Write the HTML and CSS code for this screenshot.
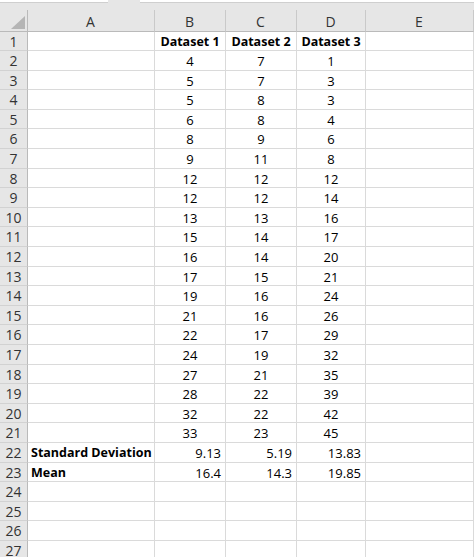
FILE: index.html
```html
<!DOCTYPE html>
<html>
<head>
  <title>Dataset statistics</title>
  <link rel="stylesheet" href="styles.css">
</head>
<body>
  <div class="workbook">
    <div class="formula-strip">
      <div class="name-box"></div>
      <div class="strip-gap"></div>
      <div class="formula-box"></div>
    </div>
    <div class="sheet" id="sheet"></div>
  </div>
  <script>
    const colB = [4, 5, 5, 6, 8, 9, 12, 12, 13, 15, 16, 17, 19, 21, 22, 24, 27, 28, 32, 33];
    const colC = [7, 7, 8, 8, 9, 11, 12, 12, 13, 14, 14, 15, 16, 16, 17, 19, 21, 22, 22, 23];
    const colD = [1, 3, 3, 4, 6, 8, 12, 14, 16, 17, 20, 21, 24, 26, 29, 32, 35, 39, 42, 45];

    const sheet = document.getElementById("sheet");

    function addCell(text, classes) {
      const cell = document.createElement("div");
      cell.className = "cell " + classes;
      cell.innerText = text;
      sheet.appendChild(cell);
      return cell;
    }

    // Column headers
    addCell("", "corner");
    ["A", "B", "C", "D", "E"].forEach(letter => addCell(letter, "col-head"));

    // Rows 1 to 27
    for (let row = 1; row <= 27; row++) {
      let cells = ["", "", "", "", ""];
      let kind = "";

      if (row === 1) {
        cells = ["", "Dataset 1", "Dataset 2", "Dataset 3", ""];
        kind = "bold center";
      } else if (row <= 21) {
        const i = row - 2;
        cells = ["", colB[i], colC[i], colD[i], ""];
        kind = "center";
      } else if (row === 22) {
        cells = ["Standard Deviation", "9.13", "5.19", "13.83", ""];
        kind = "right";
      } else if (row === 23) {
        cells = ["Mean", "16.4", "14.3", "19.85", ""];
        kind = "right";
      }

      addCell(row, "row-head");
      cells.forEach((value, col) => {
        let classes = kind;
        if (col === 0) classes = "bold";
        if (col === 4) classes = "";
        addCell(value, classes);
      });
    }
  </script>
</body>
</html>
```

FILE: styles.css
```css
/* Page reset */
body {
  margin: 0;
  background-color: #ffffff;
  font-family: "Open Sans", "Liberation Sans", sans-serif;
}

.workbook {
  width: 474px;
  height: 557px;
  overflow: hidden;
}

/* Bottom edge of the name box and formula bar */
.formula-strip {
  display: flex;
  height: 10px;
  background-color: #e6e6e6;
}

.name-box {
  width: 108px;
  height: 2px;
  background-color: #ffffff;
  border-bottom: 1px solid #cfcfcf;
}

.strip-gap {
  width: 32px;
}

.formula-box {
  flex: 1;
  height: 2px;
  background-color: #ffffff;
  border-bottom: 1px solid #cfcfcf;
}

/* Grid of cells */
.sheet {
  display: grid;
  grid-template-columns: 28px 127px 71px 71px 69px 1fr;
  grid-template-rows: 21.5px repeat(27, 19.6px);
}

.cell {
  box-sizing: border-box;
  border-right: 1px solid #dadada;
  border-bottom: 1px solid #dadada;
  font-size: 13px;
  color: #000000;
  line-height: 20px;
  padding: 0 4px 0 3px;
  white-space: nowrap;
  overflow: hidden;
}

.bold {
  font-weight: bold;
  font-size: 12.5px;
}

.center {
  text-align: center;
  padding: 0;
}

.right {
  text-align: right;
}

/* Headers */
.corner,
.col-head,
.row-head {
  background-color: #e6e6e6;
  color: #333333;
  border-color: #c9c9c9;
  font-size: 14px;
}

.col-head {
  text-align: center;
  line-height: 23px;
  border-bottom-color: #bababa;
}

.row-head {
  text-align: center;
  padding: 0;
  border-right-color: #bababa;
  border-bottom-color: #d2d2d2;
}

.corner {
  display: flex;
  align-items: flex-end;
  justify-content: flex-end;
  padding: 0 2px 2px 0;
  border-bottom-color: #bababa;
  border-right-color: #bababa;
}

.corner::after {
  content: "";
  display: block;
  width: 0;
  height: 0;
  border-left: 14px solid transparent;
  border-bottom: 13px solid #b5b5b5;
}
```
